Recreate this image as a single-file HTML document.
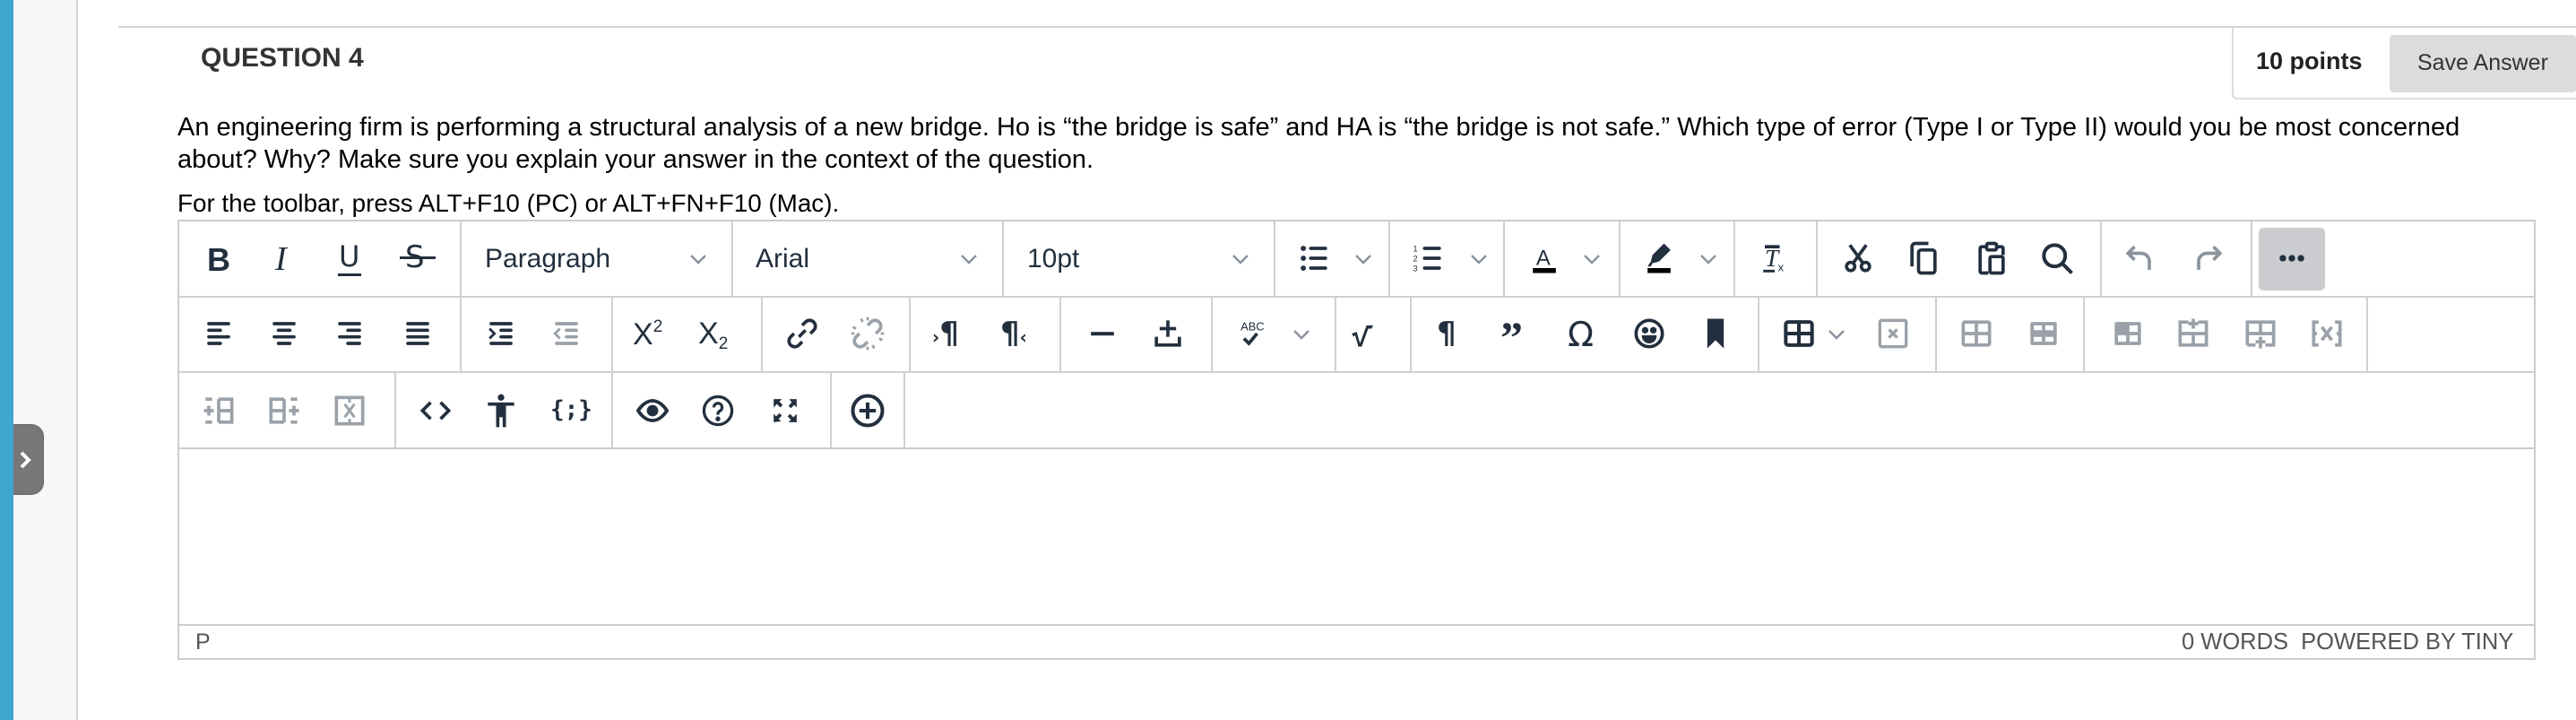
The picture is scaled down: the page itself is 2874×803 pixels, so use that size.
<!DOCTYPE html>
<html><head><meta charset="utf-8"><style>
*{margin:0;padding:0;box-sizing:border-box}
body{width:2874px;height:803px;position:relative;background:#fff;overflow:hidden;font-family:"Liberation Sans",Arial,sans-serif}
.a{position:absolute}
.i{position:absolute;width:44px;height:44px}
.i svg{width:44px;height:44px;display:block}
.t{position:absolute;color:#222f3e;line-height:1;white-space:nowrap}
.vl{position:absolute;width:2px;background:#d0d0d0}
.ch{position:absolute;width:24px;height:24px}
</style></head><body>
<div class="a" style="left:0;top:0;width:15px;height:803px;background:#3fa6cf"></div>
<div class="a" style="left:15px;top:0;width:72px;height:803px;background:#f7f7f7;border-right:2px solid #d6d6d6"></div>
<div class="a" style="left:15px;top:473px;width:34px;height:79px;background:#777;border-radius:0 14px 14px 0;border:1px solid #666;border-left:none"></div>
<svg class="a" style="left:18px;top:500px" width="20" height="26" viewBox="0 0 20 26"><path d="M6 5l8 8-8 8" stroke="#fff" stroke-width="4" fill="none"/></svg>

<div class="a" style="left:132px;top:29px;width:2742px;height:2px;background:#d4d4d4"></div>
<div class="t" style="left:224px;top:50px;font-size:30px;font-weight:bold;color:#333">QUESTION 4</div>

<div class="a" style="left:2490px;top:31px;width:384px;height:80px;border-left:2px solid #ddd;border-bottom:2px solid #ddd;border-radius:0 0 0 6px;background:#fff"></div>
<div class="t" style="left:2517px;top:55px;font-size:27px;font-weight:bold;color:#222">10 points</div>
<div class="a" style="left:2666px;top:39px;width:208px;height:64px;background:#dcdcdc;border-radius:4px"></div>
<div class="t" style="left:2697px;top:58px;font-size:25px;color:#333">Save Answer</div>

<div class="t" style="left:198px;top:128px;font-size:29px;color:#000">An engineering firm is performing a structural analysis of a new bridge. Ho is “the bridge is safe” and HA is “the bridge is not safe.” Which type of error (Type I or Type II) would you be most concerned</div>
<div class="t" style="left:198px;top:164px;font-size:29px;color:#000">about? Why? Make sure you explain your answer in the context of the question.</div>
<div class="t" style="left:198px;top:213px;font-size:27.8px;color:#000">For the toolbar, press ALT+F10 (PC) or ALT+FN+F10 (Mac).</div>

<!-- editor -->
<div class="a" style="left:198px;top:245px;width:2631px;height:491px;border:2px solid #ccc"></div>
<div class="a" style="left:198px;top:330px;width:2631px;height:2px;background:#d0d0d0"></div>
<div class="a" style="left:198px;top:414px;width:2631px;height:2px;background:#d0d0d0"></div>
<div class="a" style="left:198px;top:499px;width:2631px;height:2px;background:#ccc"></div>
<div class="a" style="left:198px;top:696px;width:2631px;height:2px;background:#ccc"></div>
<div class="t" style="left:218px;top:704px;font-size:25px;color:#555">P</div>
<div class="t" style="left:2434px;top:704px;font-size:25.5px;color:#555">0 WORDS&nbsp; POWERED BY TINY</div>

<!-- row1 separators -->
<div class="vl" style="left:513px;top:247px;height:83px"></div>
<div class="vl" style="left:816px;top:247px;height:83px"></div>
<div class="vl" style="left:1118px;top:247px;height:83px"></div>
<div class="vl" style="left:1421px;top:247px;height:83px"></div>
<div class="vl" style="left:1549px;top:247px;height:83px"></div>
<div class="vl" style="left:1677px;top:247px;height:83px"></div>
<div class="vl" style="left:1806px;top:247px;height:83px"></div>
<div class="vl" style="left:1934px;top:247px;height:83px"></div>
<div class="vl" style="left:2026px;top:247px;height:83px"></div>
<div class="vl" style="left:2343px;top:247px;height:83px"></div>
<div class="vl" style="left:2511px;top:247px;height:83px"></div>
<!-- row2 separators -->
<div class="vl" style="left:513px;top:332px;height:82px"></div>
<div class="vl" style="left:682px;top:332px;height:82px"></div>
<div class="vl" style="left:849px;top:332px;height:82px"></div>
<div class="vl" style="left:1014px;top:332px;height:82px"></div>
<div class="vl" style="left:1182px;top:332px;height:82px"></div>
<div class="vl" style="left:1351px;top:332px;height:82px"></div>
<div class="vl" style="left:1489px;top:332px;height:82px"></div>
<div class="vl" style="left:1573px;top:332px;height:82px"></div>
<div class="vl" style="left:1961px;top:332px;height:82px"></div>
<div class="vl" style="left:2159px;top:332px;height:82px"></div>
<div class="vl" style="left:2324px;top:332px;height:82px"></div>
<div class="vl" style="left:2640px;top:332px;height:82px"></div>
<!-- row3 separators -->
<div class="vl" style="left:440px;top:416px;height:83px"></div>
<div class="vl" style="left:682px;top:416px;height:83px"></div>
<div class="vl" style="left:926px;top:416px;height:83px"></div>
<div class="vl" style="left:1008px;top:416px;height:83px"></div>

<!-- row1 -->
<div class="t" style="left:231px;top:272px;font-size:36px;font-weight:bold">B</div>
<div class="t" style="left:307px;top:270px;font-size:38px;font-style:italic;font-family:'Liberation Serif',serif">I</div>
<div class="t" style="left:378px;top:270px;font-size:32px;font-family:'DejaVu Sans',sans-serif">U</div>
<div class="a" style="left:377px;top:305px;width:26px;height:3px;background:#222f3e"></div>
<div class="t" style="left:452px;top:270px;font-size:34px;font-family:'DejaVu Sans',sans-serif">S</div>
<div class="a" style="left:446px;top:286px;width:40px;height:3px;background:#222f3e"></div>

<div class="t" style="left:541px;top:274px;font-size:30px">Paragraph</div>
<div class="t" style="left:843px;top:274px;font-size:30px">Arial</div>
<div class="t" style="left:1146px;top:274px;font-size:30px">10pt</div>
<svg class="ch" style="left:767px;top:277px" viewBox="0 0 24 24"><path d="M4 8l8 8 8-8" stroke="#8a939d" stroke-width="2.5" fill="none"/></svg>
<svg class="ch" style="left:1069px;top:277px" viewBox="0 0 24 24"><path d="M4 8l8 8 8-8" stroke="#8a939d" stroke-width="2.5" fill="none"/></svg>
<svg class="ch" style="left:1372px;top:277px" viewBox="0 0 24 24"><path d="M4 8l8 8 8-8" stroke="#8a939d" stroke-width="2.5" fill="none"/></svg>
<svg class="ch" style="left:1509px;top:277px" viewBox="0 0 24 24"><path d="M4 8l8 8 8-8" stroke="#8a939d" stroke-width="2.5" fill="none"/></svg>
<svg class="ch" style="left:1638px;top:277px" viewBox="0 0 24 24"><path d="M4 8l8 8 8-8" stroke="#8a939d" stroke-width="2.5" fill="none"/></svg>
<svg class="ch" style="left:1764px;top:277px" viewBox="0 0 24 24"><path d="M4 8l8 8 8-8" stroke="#8a939d" stroke-width="2.5" fill="none"/></svg>
<svg class="ch" style="left:1894px;top:277px" viewBox="0 0 24 24"><path d="M4 8l8 8 8-8" stroke="#8a939d" stroke-width="2.5" fill="none"/></svg>

<div class="i" style="left:1444px;top:266px"><svg viewBox="0 0 24 24" fill="#222f3e"><circle cx="5.5" cy="6" r="1.6"/><circle cx="5.5" cy="12" r="1.6"/><circle cx="5.5" cy="18" r="1.6"/><rect x="9" y="5" width="11" height="2" rx="1"/><rect x="9" y="11" width="11" height="2" rx="1"/><rect x="9" y="17" width="11" height="2" rx="1"/></svg></div>
<div class="i" style="left:1571px;top:266px"><svg viewBox="0 0 24 24" fill="#222f3e"><text x="3" y="8" font-size="5" font-family="Liberation Sans">1</text><text x="3" y="14" font-size="5" font-family="Liberation Sans">2</text><text x="3" y="20" font-size="5" font-family="Liberation Sans">3</text><rect x="9" y="5" width="11" height="2" rx="1"/><rect x="9" y="11" width="11" height="2" rx="1"/><rect x="9" y="17" width="11" height="2" rx="1"/></svg></div>
<div class="i" style="left:1701px;top:266px"><svg viewBox="0 0 24 24"><text x="7" y="16" font-size="13" fill="#222f3e" font-family="Liberation Sans">A</text><rect x="5" y="18" width="14" height="3" fill="#000"/></svg></div>
<div class="i" style="left:1829px;top:266px"><svg viewBox="0 0 24 24"><path d="M15 3l4 4-7 7-4 1-1 2H5l2-3 1-4z" fill="#222f3e"/><rect x="5" y="18" width="14" height="3" fill="#000"/></svg></div>
<div class="i" style="left:1958px;top:266px"><svg viewBox="0 0 24 24" fill="#222f3e"><text x="6" y="17" font-size="15" font-style="italic" font-family="Liberation Serif">T</text><rect x="6" y="4" width="9" height="2"/><rect x="5" y="19" width="7" height="1.6"/><text x="14" y="20" font-size="7" font-family="Liberation Sans">x</text></svg></div>
<div class="i" style="left:2051px;top:266px"><svg viewBox="0 0 24 24" fill="none" stroke="#222f3e" stroke-width="2"><circle cx="7.5" cy="17" r="2.5"/><circle cx="16.5" cy="17" r="2.5"/><path d="M9 15L17 4M15 15L7 4"/></svg></div>
<div class="i" style="left:2124px;top:266px"><svg viewBox="0 0 24 24" fill="none" stroke="#222f3e" stroke-width="2"><path d="M15 3H7a2 2 0 0 0-2 2v12"/><rect x="9" y="7" width="10" height="14" rx="1.5"/></svg></div>
<div class="i" style="left:2200px;top:266px"><svg viewBox="0 0 24 24" fill="none" stroke="#222f3e" stroke-width="2"><path d="M9 5H6a1 1 0 0 0-1 1v14a1 1 0 0 0 1 1h4"/><path d="M15 5h3a1 1 0 0 1 1 1v4"/><rect x="9" y="3" width="6" height="4" rx="1"/><rect x="11" y="11" width="8" height="10" rx="1"/></svg></div>
<div class="i" style="left:2273px;top:266px"><svg viewBox="0 0 24 24" fill="none" stroke="#222f3e" stroke-width="2.2"><circle cx="10.5" cy="10.5" r="6.5"/><path d="M15.5 15.5L21 21"/></svg></div>
<div class="i" style="left:2365px;top:266px"><svg viewBox="0 0 24 24" fill="none" stroke="#8a939d" stroke-width="2"><path d="M9 5L5 9l4 4"/><path d="M5 9h8a5 5 0 0 1 5 5v5"/></svg></div>
<div class="i" style="left:2442px;top:266px"><svg viewBox="0 0 24 24" fill="none" stroke="#8a939d" stroke-width="2"><path d="M15 5l4 4-4 4"/><path d="M19 9h-8a5 5 0 0 0-5 5v5"/></svg></div>
<div class="a" style="left:2520px;top:254px;width:74px;height:70px;background:#cbcccf;border-radius:5px"></div>
<div class="i" style="left:2535px;top:266px"><svg viewBox="0 0 24 24" fill="#222f3e"><circle cx="6.5" cy="12" r="2"/><circle cx="12" cy="12" r="2"/><circle cx="17.5" cy="12" r="2"/></svg></div>

<!-- row2 -->
<div class="i" style="left:222px;top:350px"><svg viewBox="0 0 24 24" fill="#222f3e"><rect x="5" y="5" width="14" height="2" rx="1"/><rect x="5" y="9" width="9" height="2" rx="1"/><rect x="5" y="13" width="14" height="2" rx="1"/><rect x="5" y="17" width="9" height="2" rx="1"/></svg></div>
<div class="i" style="left:295px;top:350px"><svg viewBox="0 0 24 24" fill="#222f3e"><rect x="5" y="5" width="14" height="2" rx="1"/><rect x="7.5" y="9" width="9" height="2" rx="1"/><rect x="5" y="13" width="14" height="2" rx="1"/><rect x="7.5" y="17" width="9" height="2" rx="1"/></svg></div>
<div class="i" style="left:368px;top:350px"><svg viewBox="0 0 24 24" fill="#222f3e"><rect x="5" y="5" width="14" height="2" rx="1"/><rect x="10" y="9" width="9" height="2" rx="1"/><rect x="5" y="13" width="14" height="2" rx="1"/><rect x="10" y="17" width="9" height="2" rx="1"/></svg></div>
<div class="i" style="left:444px;top:350px"><svg viewBox="0 0 24 24" fill="#222f3e"><rect x="5" y="5" width="14" height="2" rx="1"/><rect x="5" y="9" width="14" height="2" rx="1"/><rect x="5" y="13" width="14" height="2" rx="1"/><rect x="5" y="17" width="14" height="2" rx="1"/></svg></div>
<div class="i" style="left:537px;top:350px"><svg viewBox="0 0 24 24" fill="#222f3e"><rect x="5" y="5" width="14" height="2" rx="1"/><rect x="11" y="9" width="8" height="2" rx="1"/><rect x="11" y="13" width="8" height="2" rx="1"/><rect x="5" y="17" width="14" height="2" rx="1"/><path d="M5 9l3 3-3 3" stroke="#222f3e" stroke-width="1.5" fill="none"/></svg></div>
<div class="i" style="left:610px;top:350px"><svg viewBox="0 0 24 24" fill="#9aa1a8"><rect x="5" y="5" width="14" height="2" rx="1"/><rect x="11" y="9" width="8" height="2" rx="1"/><rect x="11" y="13" width="8" height="2" rx="1"/><rect x="5" y="17" width="14" height="2" rx="1"/><path d="M8 9l-3 3 3 3" stroke="#9aa1a8" stroke-width="1.5" fill="none"/></svg></div>
<div class="t" style="left:706px;top:355px;font-size:34px">X<span style="font-size:19px;vertical-align:14px">2</span></div>
<div class="t" style="left:779px;top:355px;font-size:34px">X<span style="font-size:19px;vertical-align:-6px">2</span></div>
<div class="i" style="left:873px;top:350px"><svg viewBox="0 0 24 24" fill="none" stroke="#222f3e" stroke-width="2"><path d="M10 14l4-4"/><path d="M12 7l2-2a3 3 0 0 1 5 5l-2 2"/><path d="M12 17l-2 2a3 3 0 0 1-5-5l2-2"/></svg></div>
<div class="i" style="left:946px;top:350px"><svg viewBox="0 0 24 24" fill="none" stroke="#9aa1a8" stroke-width="2"><path d="M12 7l2-2a3 3 0 0 1 5 5l-2 2"/><path d="M12 17l-2 2a3 3 0 0 1-5-5l2-2"/><path d="M8 3l1 2M3 8l2 1M16 21l-1-2M21 16l-2-1M12 2v2M2 12h2M12 22v-2M22 12h-2" stroke-width="1.5"/></svg></div>
<div class="t" style="left:1040px;top:355px;font-size:34px;font-weight:bold;font-family:'DejaVu Sans',sans-serif"><span style="font-size:20px">›</span>¶</div>
<div class="t" style="left:1116px;top:355px;font-size:34px;font-weight:bold;font-family:'DejaVu Sans',sans-serif">¶<span style="font-size:20px">‹</span></div>
<div class="i" style="left:1208px;top:350px"><svg viewBox="0 0 24 24" fill="#222f3e"><rect x="5" y="11" width="14" height="2.2"/></svg></div>
<div class="i" style="left:1281px;top:350px"><svg viewBox="0 0 24 24" fill="#222f3e"><rect x="11" y="4" width="2" height="10"/><rect x="7" y="8" width="10" height="2"/><path d="M4 14h2v4h12v-4h2v6H4z"/></svg></div>
<div class="i" style="left:1375px;top:350px"><svg viewBox="0 0 24 24"><text x="5" y="10" font-size="7" fill="#222f3e" font-family="Liberation Sans">ABC</text><path d="M7 15l3 3 5-6" stroke="#222f3e" stroke-width="2" fill="none"/></svg></div>
<svg class="ch" style="left:1440px;top:361px" viewBox="0 0 24 24"><path d="M4 8l8 8 8-8" stroke="#8a939d" stroke-width="2.5" fill="none"/></svg>
<div class="i" style="left:1499px;top:350px"><svg viewBox="0 0 24 24" fill="#222f3e"><path d="M5 12l3-1 2 7 4-11h4l-1 2h-2l-4 11h-2l-2-7-1 1z"/></svg></div>
<div class="t" style="left:1603px;top:355px;font-size:34px;font-weight:bold;font-family:'DejaVu Sans',sans-serif">¶</div>
<div class="t" style="left:1674px;top:351px;font-size:50px;font-weight:bold;font-family:'Liberation Serif',serif">”</div>
<div class="t" style="left:1749px;top:354px;font-size:38px;font-family:'DejaVu Sans',sans-serif">Ω</div>
<div class="i" style="left:1818px;top:350px"><svg viewBox="0 0 24 24" fill="none" stroke="#222f3e" stroke-width="2"><circle cx="12" cy="12" r="8"/><circle cx="9.5" cy="10" r="1" fill="#222f3e"/><circle cx="14.5" cy="10" r="1" fill="#222f3e"/><path d="M8 13.5h8a4 4 0 0 1-8 0z" fill="#222f3e" stroke-width="1"/></svg></div>
<div class="i" style="left:1892px;top:350px"><svg viewBox="0 0 24 24" fill="#222f3e"><path d="M7 3h10v18l-5-5-5 5z"/></svg></div>
<div class="i" style="left:1985px;top:350px"><svg viewBox="0 0 24 24" fill="none" stroke="#222f3e" stroke-width="2.2"><rect x="4" y="5" width="16" height="14" rx="1.5"/><path d="M4 12h16M12 5v14"/></svg></div>
<svg class="ch" style="left:2037px;top:361px" viewBox="0 0 24 24"><path d="M4 8l8 8 8-8" stroke="#8a939d" stroke-width="2.5" fill="none"/></svg>
<div class="i" style="left:2090px;top:350px"><svg viewBox="0 0 24 24" fill="none" stroke="#9aa1a8" stroke-width="1.8"><rect x="4" y="4" width="16" height="16" rx="1"/><path d="M9.5 9.5l5 5M14.5 9.5l-5 5"/></svg></div>
<div class="i" style="left:2183px;top:350px"><svg viewBox="0 0 24 24" fill="none" stroke="#9aa1a8" stroke-width="2"><rect x="4" y="5" width="16" height="14" rx="1"/><path d="M4 12h16M12 5v14"/></svg></div>
<div class="i" style="left:2258px;top:350px"><svg viewBox="0 0 24 24"><rect x="4" y="5" width="16" height="14" rx="1" fill="#9aa1a8"/><path d="M6 14h5v3H6zM13 14h5v3h-5zM6 7h5v3H6zM13 7h5v3h-5z" fill="#fff"/><rect x="4" y="10" width="16" height="4" fill="#9aa1a8"/></svg></div>
<div class="i" style="left:2352px;top:350px"><svg viewBox="0 0 24 24"><rect x="4" y="5" width="16" height="14" rx="1" fill="#9aa1a8"/><path d="M13 7h5v4h-5zM6 13h5v4H6zM13 13h5v4h-5z" fill="#fff"/></svg></div>
<div class="i" style="left:2425px;top:350px"><svg viewBox="0 0 24 24" fill="none" stroke="#9aa1a8" stroke-width="2"><path d="M9 5H4v14h16V5h-5M4 12h16M12 13v6"/><path d="M12 3v6M9 6h6"/></svg></div>
<div class="i" style="left:2500px;top:350px"><svg viewBox="0 0 24 24" fill="none" stroke="#9aa1a8" stroke-width="2"><path d="M4 19V5h16v14h-5M9 19H4M4 12h16M12 5v7"/><path d="M12 14v7M9 17h6"/></svg></div>
<div class="i" style="left:2574px;top:350px"><svg viewBox="0 0 24 24" fill="none" stroke="#9aa1a8" stroke-width="2"><path d="M7 5H4v14h3M17 5h3v14h-3M4 12h2M18 12h2"/><path d="M9 8l6 8M15 8l-6 8"/></svg></div>

<!-- row3 -->
<div class="i" style="left:222px;top:436px"><svg viewBox="0 0 24 24" fill="none" stroke="#9aa1a8" stroke-width="2"><path d="M12 5h8v14h-8M12 5v14M12 12h8M4 5h4M4 19h4"/><path d="M3 12h6M6 9v6"/></svg></div>
<div class="i" style="left:295px;top:436px"><svg viewBox="0 0 24 24" fill="none" stroke="#9aa1a8" stroke-width="2"><path d="M12 5H4v14h8M12 5v14M4 12h8M16 5h4M16 19h4"/><path d="M15 12h6M18 9v6"/></svg></div>
<div class="i" style="left:368px;top:436px"><svg viewBox="0 0 24 24" fill="none" stroke="#9aa1a8" stroke-width="2"><rect x="4" y="4" width="16" height="16"/><path d="M9 8l6 8M15 8l-6 8M12 4v3M12 17v3" stroke-width="1.6"/></svg></div>
<div class="i" style="left:464px;top:436px"><svg viewBox="0 0 24 24" fill="none" stroke="#222f3e" stroke-width="2"><path d="M9 7l-5 5 5 5M15 7l5 5-5 5"/></svg></div>
<div class="i" style="left:537px;top:436px"><svg viewBox="0 0 24 24" fill="#222f3e"><circle cx="12" cy="4" r="2"/><path d="M4 7h16v2h-5v13h-2v-6h-2v6H9V9H4z"/></svg></div>
<div class="t" style="left:614px;top:444px;font-size:26px;font-weight:bold;font-family:'DejaVu Sans Mono',monospace">{;}</div>
<div class="i" style="left:706px;top:436px"><svg viewBox="0 0 24 24"><path d="M2 12c3-5 7-7 10-7s7 2 10 7c-3 5-7 7-10 7s-7-2-10-7z" fill="#222f3e"/><path d="M4.5 12c2.5-3.5 5-5 7.5-5s5 1.5 7.5 5c-2.5 3.5-5 5-7.5 5s-5-1.5-7.5-5z" fill="#fff"/><circle cx="12" cy="12" r="3.5" fill="#222f3e"/></svg></div>
<div class="i" style="left:779px;top:436px"><svg viewBox="0 0 24 24" fill="none" stroke="#222f3e" stroke-width="1.8"><circle cx="12" cy="12" r="8.5"/><path d="M9.5 10a2.5 2.5 0 1 1 3.5 2.3c-.8.4-1 1-1 1.7v.5"/><circle cx="12" cy="17" r=".6" fill="#222f3e"/></svg></div>
<div class="i" style="left:854px;top:436px"><svg viewBox="0 0 24 24" fill="#222f3e"><path d="M5 5h5l-1.5 1.5 2 2-1.5 1.5-2-2L5 10zM19 5v5l-1.5-1.5-2 2L14 9l2-2L14.5 5zM5 19v-5l1.5 1.5 2-2L10 15l-2 2 1.5 1.5zM19 19h-5l1.5-1.5-2-2 1.5-1.5 2 2L19 14z"/></svg></div>
<div class="i" style="left:946px;top:436px"><svg viewBox="0 0 24 24" fill="none" stroke="#222f3e" stroke-width="2.2"><circle cx="12" cy="12" r="9"/><path d="M12 7v10M7 12h10"/></svg></div>
</body></html>
